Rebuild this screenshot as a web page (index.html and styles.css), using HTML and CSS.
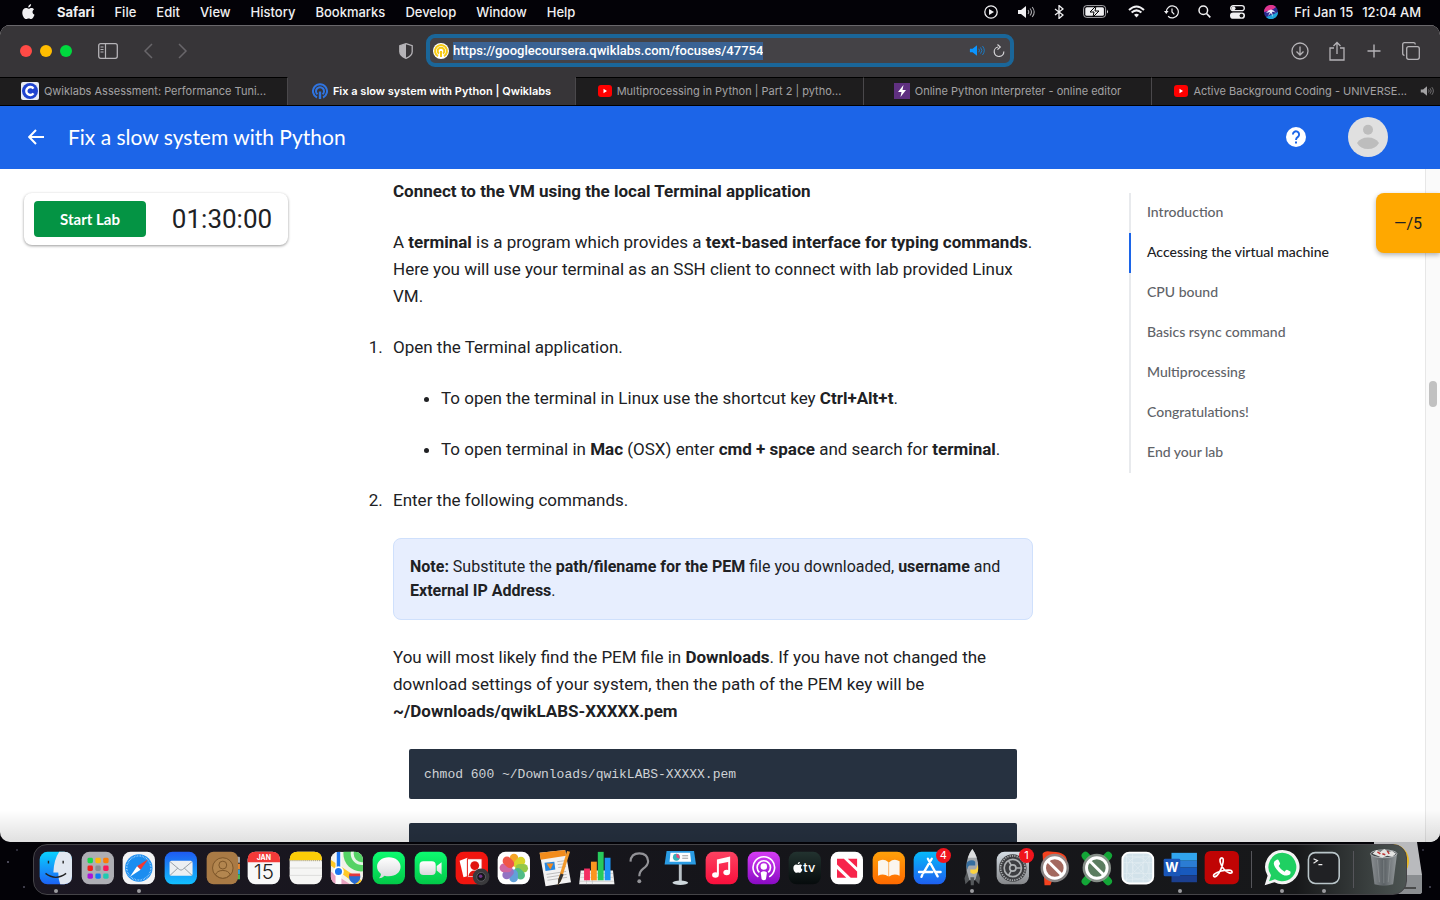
FILE: index.html
```html
<!DOCTYPE html>
<html lang="en">

<head>
  <meta charset="UTF-8">
  <meta name="viewport" content="width=device-width, initial-scale=1.0">
  <title>Fix a slow system with Python | Qwiklabs</title>
  <link rel="stylesheet" href="styles.css">
</head>

<body>
  <!-- shared gradients and small icons -->
  <svg class="defs" width="0" height="0" aria-hidden="true">
    <defs>
      <linearGradient id="g-blue" x2="0" y2="1"><stop stop-color="#1f5bf0"/><stop offset="1" stop-color="#12c0ff"/></linearGradient>
      <linearGradient id="g-store" x2="0" y2="1"><stop stop-color="#06b9f9"/><stop offset="1" stop-color="#1e5ff0"/></linearGradient>
      <linearGradient id="g-finder" x2="0" y2="1"><stop stop-color="#0ad1ff"/><stop offset="1" stop-color="#1c62f4"/></linearGradient>
      <linearGradient id="g-green" x2="0" y2="1"><stop stop-color="#0dfb70"/><stop offset="1" stop-color="#02c948"/></linearGradient>
      <linearGradient id="g-white" x2="0" y2="1"><stop stop-color="#ffffff"/><stop offset="1" stop-color="#d8d8dc"/></linearGradient>
      <linearGradient id="g-orange" x2="0" y2="1"><stop stop-color="#ffa10a"/><stop offset="1" stop-color="#ff6a00"/></linearGradient>
      <linearGradient id="g-pink" x2="0" y2="1"><stop stop-color="#fb4261"/><stop offset="1" stop-color="#fa0f3c"/></linearGradient>
      <linearGradient id="g-purple" x2="0" y2="1"><stop stop-color="#d53df5"/><stop offset="1" stop-color="#8a0bc4"/></linearGradient>
      <linearGradient id="g-tv" x2="0" y2="1"><stop stop-color="#22322f"/><stop offset="1" stop-color="#060b0c"/></linearGradient>
      <linearGradient id="g-steel" x2="0" y2="1"><stop stop-color="#d5dde4"/><stop offset="1" stop-color="#85878a"/></linearGradient>
      <linearGradient id="g-bin" x2="1" y2="0"><stop stop-color="#8b8f92"/><stop offset=".5" stop-color="#5b6165"/><stop offset="1" stop-color="#94999b"/></linearGradient>
      <symbol id="speaker" viewBox="0 0 18 14">
        <path d="M1 5h3l5-4v12L4 9H1z" fill="currentColor"/>
        <path d="M11 5q1.500 2 0 4M13 3.500q3 3.500 0 7M15.200 2q4 5 0 10" fill="none" stroke="currentColor" stroke-width="1.100" opacity=".7"/>
      </symbol>
      <symbol id="youtube" viewBox="0 0 14 12">
        <rect width="14" height="12" rx="3" fill="#f00"/>
        <path d="M5.500 3.800v4.400L9 6z" fill="#fff"/>
      </symbol>
      <symbol id="apple" viewBox="0 0 14 17">
        <path d="M9.800 0c.2 1.900-1.400 3.700-3.100 3.700C6.500 1.900 8.100.2 9.800 0zM12.900 5.700c-2.300 1.400-1.900 4.700.6 5.700-.8 2.300-2.300 4.700-3.700 4.700-1 0-1.400-.6-2.600-.6s-1.600.6-2.600.6C2.500 16.200.3 12.300.3 9.200c0-3.200 2-5 4-5 1.200 0 2.100.7 2.900.7s1.900-.8 3.300-.8c1 0 1.900.6 2.400 1.600z" fill="currentColor"/>
      </symbol>
    </defs>
  </svg>

  <header class="menubar">
    <nav class="menus">
      <svg class="apple" viewBox="0 0 14 17"><use href="#apple"/></svg>
      <a class="app" href="#">Safari</a>
      <a href="#">File</a>
      <a href="#">Edit</a>
      <a href="#">View</a>
      <a href="#">History</a>
      <a href="#">Bookmarks</a>
      <a href="#">Develop</a>
      <a href="#">Window</a>
      <a href="#">Help</a>
    </nav>
    <div class="status">
      <svg width="14" height="14" viewBox="0 0 14 14"><circle cx="7" cy="7" r="6.200" fill="none" stroke="currentColor" stroke-width="1.300"/><path d="M5 4v6l5-3z" fill="currentColor"/></svg>
      <svg width="18" height="14"><use href="#speaker"/></svg>
      <svg width="10" height="14" viewBox="0 0 10 14"><path d="M1 4l8 6-4 3.500V.5L9 4l-8 6" fill="none" stroke="currentColor" stroke-width="1.300"/></svg>
      <svg width="26" height="13" viewBox="0 0 26 13"><rect x=".6" y=".6" width="22" height="11.800" rx="3" fill="none" stroke="currentColor" opacity=".7"/><rect x="2.300" y="2.300" width="18.600" height="8.400" rx="1.500" fill="currentColor"/><path d="M24 4.500q1.800 2 0 4z" fill="currentColor"/><path d="M13 1L7 7h4l-1 5 6-6h-4z" fill="currentColor" stroke="#000"/></svg>
      <svg width="17" height="13" viewBox="0 0 17 13"><path d="M1 5q7.500-7 15 0M3.600 7.600q4.900-4.500 9.800 0" fill="none" stroke="currentColor" stroke-width="2"/><path d="M8.500 12.500L6 9.800q2.500-2 5 0z" fill="currentColor"/></svg>
      <svg width="15" height="14" viewBox="0 0 15 14"><path d="M2.300 7a6 6 0 1 1 1.800 4.200" fill="none" stroke="currentColor" stroke-width="1.200"/><path d="M0 6h4.600L2.300 9z" fill="currentColor"/><path d="M8 3.500V7l2.300 2.300" fill="none" stroke="currentColor" stroke-width="1.200"/></svg>
      <svg width="13" height="13" viewBox="0 0 13 13"><circle cx="5.300" cy="5.300" r="4.300" fill="none" stroke="currentColor" stroke-width="1.500"/><path d="M8.500 8.500l3.800 3.800" stroke="currentColor" stroke-width="1.700"/></svg>
      <svg width="15" height="14" viewBox="0 0 15 14"><rect x=".7" y=".7" width="13.600" height="5" rx="2.500" fill="none" stroke="currentColor" stroke-width="1.300"/><circle cx="3.500" cy="3.200" r="2" fill="currentColor"/><rect y="7.500" width="15" height="6.300" rx="3.100" fill="currentColor"/><circle cx="11.500" cy="10.600" r="1.900" fill="#111"/></svg>
      <svg width="14" height="14" viewBox="0 0 14 14"><circle cx="7" cy="7" r="7" fill="#2b2c8f"/><path d="M0 7a7 7 0 0 1 12-5Q8 6 0 7z" fill="#e0358e"/><path d="M14 7a7 7 0 0 1-12 5q6-2 12-5z" fill="#1fa5d8"/><path d="M2 8q5-7 10 0-3-2-4-1l1 5-2-4-3 3 2-4z" fill="#eef"/></svg>
      <span class="clock"><span>Fri Jan 15</span><span>12:04 AM</span></span>
    </div>
  </header>

  <main class="window">
    <div class="toolbar">
      <div class="toolbar-left">
        <div class="lights"><i></i><i></i><i></i></div>
        <button class="tool sidebar-btn" aria-label="Sidebar"><svg width="20" height="16" viewBox="0 0 20 16"><rect x=".7" y=".7" width="18.600" height="14.600" rx="2" fill="none" stroke="currentColor" stroke-width="1.300"/><path d="M7.500 1v14M2.500 4h3M2.500 6.500h3M2.500 9h3" stroke="currentColor" stroke-width="1.200"/></svg></button>
        <button class="tool dim" aria-label="Back"><svg width="10" height="16" viewBox="0 0 10 16"><path d="M9 1L2 8l7 7" fill="none" stroke="currentColor" stroke-width="1.500"/></svg></button>
        <button class="tool dim forward" aria-label="Forward"><svg width="10" height="16" viewBox="0 0 10 16"><path d="M1 1l7 7-7 7" fill="none" stroke="currentColor" stroke-width="1.500"/></svg></button>
        <button class="tool shield" aria-label="Privacy report"><svg width="14" height="16" viewBox="0 0 14 16"><path d="M7 .7l6.200 2v6q0 4-6.200 6.600Q.8 12.700.8 8.700v-6z" fill="none" stroke="currentColor" stroke-width="1.300"/><path d="M7 .7v14.600Q.8 12.700.8 8.700v-6z" fill="currentColor"/></svg></button>
      </div>
      <div class="address">
        <svg width="16" height="16" viewBox="0 0 16 16"><circle cx="8" cy="8" r="8" fill="#fff"/><path d="M5 13.200a6 6 0 1 1 6 0M6 10.600a3.300 3.300 0 1 1 4 0" fill="none" stroke="#f7cb15" stroke-width="2"/><path d="M8 8v6" stroke="#f7cb15" stroke-width="2"/></svg>
        <input type="text" aria-label="Address" value="https://googlecoursera.qwiklabs.com/focuses/47754" size="40">
        <svg class="sound" width="16" height="13"><use href="#speaker"/></svg>
        <button class="tool reload" aria-label="Reload"><svg width="12" height="14" viewBox="0 0 12 14"><path d="M5 3a4.800 4.800 0 1 0 5.800 4.500M4.500.5L7.300 3 4.500 5.600" fill="none" stroke="currentColor" stroke-width="1.200"/></svg></button>
      </div>
      <div class="toolbar-right">
        <button class="tool" aria-label="Downloads"><svg width="18" height="18" viewBox="0 0 18 18"><path d="M9 4.500v8.500M5.500 9.500L9 13l3.500-3.500" fill="none" stroke="currentColor" stroke-width="1.300"/><circle cx="9" cy="9" r="8" fill="none" stroke="currentColor" stroke-width="1.300"/></svg></button>
        <button class="tool" aria-label="Share"><svg width="18" height="20" viewBox="0 0 18 20"><path d="M6 7H2v12h14V7h-4M9 13V1.500M5.500 5L9 1.500 12.500 5" fill="none" stroke="currentColor" stroke-width="1.300"/></svg></button>
        <button class="tool" aria-label="New tab"><svg width="18" height="18" viewBox="0 0 18 18"><path d="M9 2.500v13M2.500 9h13" stroke="currentColor" stroke-width="1.400"/></svg></button>
        <button class="tool" aria-label="Tab overview"><svg width="18" height="18" viewBox="0 0 18 18"><rect x="4.700" y="4.700" width="12.600" height="12.600" rx="2" fill="none" stroke="currentColor" stroke-width="1.300"/><path d="M2.500 13.300Q.7 13.300.7 11.500v-9Q.7.7 2.500.7h9q1.800 0 1.800 1.800" fill="none" stroke="currentColor" stroke-width="1.300"/></svg></button>
      </div>
    </div>

    <nav class="tabs">
      <a class="tab" href="#">
        <svg width="18" height="18" viewBox="0 0 18 18"><rect width="18" height="18" rx="2" fill="#e9ecf5"/><circle cx="9" cy="9" r="8" fill="#1f43cf"/><path d="M12.500 6.600a4 4 0 1 0 0 4.800" fill="none" stroke="#fff" stroke-width="2.400"/></svg>
        <span>Qwiklabs Assessment: Performance Tuni...</span>
      </a>
      <a class="tab active" href="#">
        <svg width="16" height="16" viewBox="0 0 16 16"><path d="M5 14.500a7 7 0 1 1 6 0M5.500 11.300a4 4 0 1 1 5 0" fill="none" stroke="#2f74e0" stroke-width="2"/><path d="M8 8.500V16" stroke="#2f74e0" stroke-width="2.400"/></svg>
        <span>Fix a slow system with Python | Qwiklabs</span>
      </a>
      <a class="tab" href="#">
        <svg width="14" height="12"><use href="#youtube"/></svg>
        <span>Multiprocessing in Python | Part 2 | pytho...</span>
      </a>
      <a class="tab" href="#">
        <svg width="16" height="16" viewBox="0 0 16 16"><rect width="16" height="16" fill="#5f3080"/><path d="M9.500 2L4 9h3.500L6.500 14 12 7H8.500z" fill="#fff"/></svg>
        <span>Online Python Interpreter - online editor</span>
      </a>
      <a class="tab playing" href="#">
        <svg width="14" height="12"><use href="#youtube"/></svg>
        <span>Active Background Coding - UNIVERSE...</span>
        <svg class="tab-sound" width="14" height="12"><use href="#speaker"/></svg>
      </a>
    </nav>

    <header class="lab-header">
      <a class="back" href="#" aria-label="Back"><svg width="16" height="16" viewBox="0 0 16 16"><path d="M16 8H1.500M8 1L1.200 8 8 15" fill="none" stroke="#fff" stroke-width="2"/></svg></a>
      <h1>Fix a slow system with Python</h1>
      <button class="help" aria-label="Help"><svg width="20" height="20" viewBox="0 0 20 20"><circle cx="10" cy="10" r="10" fill="#fff"/><path d="M6.900 7.500a3.100 3.100 0 1 1 5 2.400Q10 11.200 10 13" fill="none" stroke="#1c65e8" stroke-width="1.900"/><rect x="9" y="14.500" width="2" height="2" fill="#1c65e8"/></svg></button>
      <button class="avatar" aria-label="Account"><svg width="40" height="40" viewBox="0 0 40 40"><circle cx="20" cy="20" r="20" fill="#e0e0e0"/><circle cx="20" cy="12.800" r="5" fill="#bdbdbd"/><path d="M9 26q3.500-5.500 11-5.500T31 26q-3.500 6-11 6T9 26z" fill="#bdbdbd"/></svg></button>
    </header>

    <div class="lab">
      <aside class="lab-side">
        <div class="control">
          <button class="start">Start Lab</button>
          <div class="timer">01:30:00</div>
        </div>
      </aside>

      <article class="content">
        <p><strong>Connect to the VM using the local Terminal application</strong></p>
        <p>A <strong>terminal</strong> is a program which provides a <strong>text-based interface for typing commands</strong>. Here you will use your terminal as an SSH client to connect with lab provided Linux VM.</p>
        <ol>
          <li>Open the Terminal application.
            <ul>
              <li>To open the terminal in Linux use the shortcut key <strong>Ctrl+Alt+t</strong>.</li>
              <li>To open terminal in <strong>Mac</strong> (OSX) enter <strong>cmd + space</strong> and search for <strong>terminal</strong>.</li>
            </ul>
          </li>
          <li>Enter the following commands.</li>
        </ol>
        <div class="note"><strong>Note:</strong> Substitute the <strong>path/filename for the PEM</strong> file you downloaded, <strong>username</strong> and <strong>External IP Address</strong>.</div>
        <p>You will most likely find the PEM file in <strong>Downloads</strong>. If you have not changed the download settings of your system, then the path of the PEM key will be <strong class="path">~/Downloads/qwikLABS-XXXXX.pem</strong></p>
        <pre><code>chmod 600 ~/Downloads/qwikLABS-XXXXX.pem</code></pre>
        <pre></pre>
      </article>

      <nav class="outline">
        <a href="#">Introduction</a>
        <a class="active" href="#">Accessing the virtual machine</a>
        <a href="#">CPU bound</a>
        <a href="#">Basics rsync command</a>
        <a href="#">Multiprocessing</a>
        <a href="#">Congratulations!</a>
        <a href="#">End your lab</a>
      </nav>

      <div class="scrollbar"><div class="thumb"></div></div>
      <button class="score">—/5</button>
    </div>
  </main>

  <footer class="desktop">
    <svg class="drive" width="48" height="52" viewBox="0 0 48 52"><path d="M0 0h43l5 33v16q0 3-3 3H0z" fill="#b9babd"/><path d="M0 33h48v16q0 3-3 3H0z" fill="#8b8e91"/><path d="M0 46h42" stroke="#333" stroke-width="1.500"/><circle cx="18" cy="19" r="17" fill="#e8b923"/><circle cx="17" cy="19" r="16" fill="#c53a2a"/></svg>
    <nav class="dock">
      <!-- Finder -->
      <a href="#" class="running" aria-label="Finder"><svg viewBox="-4 -7 41 50"><rect width="33" height="33" rx="8" fill="url(#g-finder)"/><path d="M20 0h5q8 0 8 8v17q0 8-8 8h-4q-2-5-2-12h-5Q14.500 8 20 0z" fill="#e1e7f0"/><path d="M6 22q10.500 8 21 0M9 9v3M24 9v3" fill="none" stroke="#222" stroke-width="1.400"/></svg></a>
      <!-- Launchpad -->
      <a href="#" aria-label="Launchpad"><svg viewBox="-4 -7 41 50"><rect width="33" height="33" rx="8" fill="#aeaeb4"/><rect x="6" y="6" width="5.500" height="5.500" rx="1.500" fill="#19d84d"/><rect x="14" y="6" width="5.500" height="5.500" rx="1.500" fill="#fdb90b"/><rect x="22" y="6" width="5.500" height="5.500" rx="1.500" fill="#fb7d09"/><rect x="6" y="14" width="5.500" height="5.500" rx="1.500" fill="#f41f1d"/><rect x="14" y="14" width="5.500" height="5.500" rx="1.500" fill="#8a8e92"/><rect x="22" y="14" width="5.500" height="5.500" rx="1.500" fill="#f9185b"/><rect x="6" y="22" width="5.500" height="5.500" rx="1.500" fill="#a813dc"/><rect x="14" y="22" width="5.500" height="5.500" rx="1.500" fill="#127cf3"/><rect x="22" y="22" width="5.500" height="5.500" rx="1.500" fill="#1ecbb0"/></svg></a>
      <!-- Safari -->
      <a href="#" class="running" aria-label="Safari"><svg viewBox="-4 -7 41 50"><rect width="33" height="33" rx="8" fill="#f3f3f5"/><circle cx="16.500" cy="16.500" r="14" fill="#1b8df0"/><circle cx="16.500" cy="16.500" r="12.300" fill="none" stroke="#d5eaff" stroke-width="1.600" stroke-dasharray=".5 1.100"/><path d="M26 7.500L18.300 18.300 14.700 14.700z" fill="#f4382f"/><path d="M7.500 25.500l7.200-10.800 3.600 3.600z" fill="#fff"/></svg></a>
      <!-- Mail -->
      <a href="#" aria-label="Mail"><svg viewBox="-4 -7 41 50"><rect width="33" height="33" rx="8" fill="url(#g-blue)"/><rect x="5" y="9" width="23.500" height="15.500" rx="2" fill="#eceff2"/><path d="M5.500 10l9.500 8q1.700 1.400 3.400 0l9.500-8M5.500 24l8-7.500M28 24l-8-7.500" fill="none" stroke="#8d969e" stroke-width=".9"/></svg></a>
      <!-- Contacts -->
      <a href="#" aria-label="Contacts"><svg viewBox="-4 -7 41 50"><path d="M30 5h3q1 0 1 1v5h-4z" fill="#aaa"/><path d="M30 12h4v6h-4z" fill="#e5872f"/><path d="M30 18h4v5h-4z" fill="#2da0dc"/><path d="M30 23h4v5h-4z" fill="#4cba4d"/><rect width="32" height="33" rx="7" fill="#a97a45"/><g fill="#b3864f" stroke="#7c5529" stroke-width="1"><circle cx="16.500" cy="16.500" r="10.500"/><path d="M9 23.500q1.500-4.500 7.500-4.500t7.500 4.500q-7.500 7-15 0z"/><circle cx="16.500" cy="13.500" r="4"/></g></svg></a>
      <!-- Calendar -->
      <a href="#" aria-label="Calendar"><svg viewBox="-4 -7 41 50"><rect width="33" height="33" rx="8" fill="#f8f8f8"/><path d="M0 10.500V8q0-8 8-8h17q8 0 8 8v2.500z" fill="#f33a38"/><text x="16.500" y="8" class="cal-month">JAN</text><text x="16.500" y="28" class="cal-day">15</text></svg></a>
      <!-- Notes -->
      <a href="#" aria-label="Notes"><svg viewBox="-4 -7 41 50"><rect width="33" height="33" rx="8" fill="#f5f5f4"/><path d="M0 8.500V8q0-8 8-8h17q8 0 8 8v.5z" fill="#fccd07"/><path d="M0 9h33" stroke="#9b9580" stroke-dasharray="1 1"/><path d="M0 16.500h33M0 24h33" stroke="#d6d6d4" stroke-width=".8"/></svg></a>
      <!-- Maps -->
      <a href="#" aria-label="Maps"><svg viewBox="-4 -7 41 50"><clipPath id="c-maps"><rect width="33" height="33" rx="8"/></clipPath><g clip-path="url(#c-maps)"><rect width="33" height="33" fill="#f3f1ea"/><circle cx="31" cy="2" r="18" fill="#55d365"/><circle cx="32" cy="2" r="10" fill="none" stroke="#e6f6e6" stroke-width="3"/><path d="M0 8l33 22v8L0 14z" fill="#ffc928"/><path d="M0 20l20 13H0z" fill="#e9a2c0"/><path d="M8 33V0" stroke="#fff" stroke-width="6"/><path d="M8 20V0" stroke="#1d76f0" stroke-width="3.600"/><circle cx="8" cy="20" r="4.500" fill="#1d76f0" stroke="#fff" stroke-width="1.800"/><path d="M19 23h11q2 6-5.500 10Q17 29 19 23z" fill="#2a6bd2"/><path d="M19 22h11v3H19z" fill="#e3373c"/></g></svg></a>
      <!-- Messages -->
      <a href="#" aria-label="Messages"><svg viewBox="-4 -7 41 50"><rect width="33" height="33" rx="8" fill="url(#g-green)"/><path d="M16.500 5.500c7 0 12 4.200 12 9.800s-5 9.700-12 9.700c-1.600 0-3-.2-4.300-.6Q9.500 27 6.500 27q2-2 2-4.500c-2.500-1.800-4-4.300-4-7.200 0-5.600 5-9.800 12-9.800z" fill="url(#g-white)"/></svg></a>
      <!-- FaceTime -->
      <a href="#" aria-label="FaceTime"><svg viewBox="-4 -7 41 50"><rect width="33" height="33" rx="8" fill="url(#g-green)"/><rect x="5" y="9.500" width="16.500" height="14" rx="4" fill="url(#g-white)"/><path d="M22.500 14.500l5-4v12.500l-5-4z" fill="url(#g-white)"/></svg></a>
      <!-- Photo Booth -->
      <a href="#" aria-label="Photo Booth"><svg viewBox="-4 -7 41 50"><rect width="33" height="33" rx="8" fill="#f1150f"/><path d="M4 9l8-3 3 18-7 2z" fill="#fff"/><path d="M12 7h15v19H12z" fill="#fff" stroke="#e01510"/><circle cx="19.500" cy="14" r="4.500" fill="#e01510"/><path d="M13 25q1-6 6.500-6t6.500 6z" fill="#e01510"/><circle cx="26" cy="25.500" r="8.500" fill="#3a3a3d"/><circle cx="26" cy="25.500" r="4.500" fill="#17171b" stroke="#5b5b60"/><circle cx="25.500" cy="25" r="1.800" fill="#703488"/></svg></a>
      <!-- Photos -->
      <a href="#" aria-label="Photos"><svg viewBox="-4 -7 41 50"><rect width="33" height="33" rx="8" fill="#fff"/><g opacity=".95"><rect x="12.300" y="2" width="8.800" height="13" rx="4.400" fill="#f7a11b"/><rect x="12.300" y="2" width="8.800" height="13" rx="4.400" fill="#d5d320" transform="rotate(45 16.500 16.500)"/><rect x="12.300" y="2" width="8.800" height="13" rx="4.400" fill="#8fc63f" transform="rotate(90 16.500 16.500)"/><rect x="12.300" y="2" width="8.800" height="13" rx="4.400" fill="#47b881" transform="rotate(135 16.500 16.500)"/><rect x="12.300" y="2" width="8.800" height="13" rx="4.400" fill="#5a9bd8" transform="rotate(180 16.500 16.500)"/><rect x="12.300" y="2" width="8.800" height="13" rx="4.400" fill="#8d6cc0" transform="rotate(225 16.500 16.500)"/><rect x="12.300" y="2" width="8.800" height="13" rx="4.400" fill="#cd5f9c" transform="rotate(270 16.500 16.500)"/><rect x="12.300" y="2" width="8.800" height="13" rx="4.400" fill="#f04e3e" transform="rotate(315 16.500 16.500)"/></g></svg></a>
      <!-- Pages -->
      <a href="#" aria-label="Pages"><svg viewBox="-4 -7 41 50"><path d="M0 1l26-3 6 33-26 4z" fill="#f2f2f2"/><path d="M0 1l26-3 1 6L1 8z" fill="#f28c1c"/><path d="M5 11l10-1 1 8-10 1.500z" fill="#2787df"/><path d="M7 12h7l-3 6z" fill="#f58a1d"/><path d="M18 10l8-1M18.500 13l8-1M19 16l8-1M7 23l20-3M7.500 26l20-3M8 29l20-3" stroke="#bbb"/><path d="M28-1l3 1-9 29-3.500 5 .5-6z" fill="#f29a2c"/><path d="M21.500 22l3 1-3 7-3 4 .5-6z" fill="#333"/></svg></a>
      <!-- Numbers -->
      <a href="#" aria-label="Numbers"><svg viewBox="-4 -7 41 50"><path d="M0 19h33l1.500 14h-36z" fill="#f1f1f1"/><path d="M0 22h33M-.5 26h34M-1 30h35M6 19v14M12 19v14" stroke="#bbb" stroke-width=".6"/><path d="M3.500 17h6v12h-6z" fill="#f42f63"/><path d="M10.500 10h6v19h-6z" fill="#fb9520"/><path d="M17.500 0h6v29h-6z" fill="#27ca5c"/><path d="M24.500 6h6v23h-6z" fill="#1c93f3"/></svg></a>
      <!-- missing app -->
      <a href="#" aria-label="Unknown application"><svg viewBox="-4 -7 41 50"><path d="M8 10q.5-8.500 9-8.500t9 8q0 4-5 7.500-4 3-4 8" fill="none" stroke="#929297" stroke-width="2.200"/><circle cx="17" cy="30" r="2" fill="#929297"/></svg></a>
      <!-- Keynote -->
      <a href="#" aria-label="Keynote"><svg viewBox="-4 -7 41 50"><path d="M15.500 12h3v18h-3z" fill="#b9c1c6"/><ellipse cx="17" cy="31.500" rx="8" ry="2.300" fill="#cfd8dd"/><path d="M3-1h28l2 14H1z" fill="#2a9ce4"/><path d="M7 1h20l1 9H6z" fill="#fff"/><circle cx="13" cy="5.500" r="3.500" fill="#33b4ba"/><path d="M13 5.500V2a3.500 3.500 0 0 1 3 5z" fill="#e94a7a"/><path d="M19 4h6M19 6.500h6" stroke="#999"/></svg></a>
      <!-- Music -->
      <a href="#" aria-label="Music"><svg viewBox="-4 -7 41 50"><rect width="33" height="33" rx="8" fill="url(#g-pink)"/><path d="M12.500 23V8.500L24 6v14.500" fill="none" stroke="#fff" stroke-width="2"/><path d="M12.500 8.500L24 6v4l-11.500 2.500z" fill="#fff"/><ellipse cx="10" cy="23.500" rx="3.400" ry="2.800" fill="#fff"/><ellipse cx="21.500" cy="21" rx="3.400" ry="2.800" fill="#fff"/></svg></a>
      <!-- Podcasts -->
      <a href="#" aria-label="Podcasts"><svg viewBox="-4 -7 41 50"><rect width="33" height="33" rx="8" fill="url(#g-purple)"/><g fill="none" stroke="#fff" stroke-width="1.700"><path d="M11 25.500a11 11 0 1 1 11 0M12 21a6.800 6.800 0 1 1 9 0"/></g><circle cx="16.500" cy="15" r="3.300" fill="#fff"/><path d="M13.300 21q3.200-2.500 6.400 0l-1 7q-2.200 2-4.400 0z" fill="#fff"/></svg></a>
      <!-- TV -->
      <a href="#" aria-label="TV"><svg viewBox="-4 -7 41 50"><rect width="33" height="33" rx="8" fill="url(#g-tv)"/><svg x="4.500" y="10" width="10" height="12" color="#fff"><use href="#apple"/></svg><text x="15" y="21" class="tv">tv</text></svg></a>
      <!-- News -->
      <a href="#" aria-label="News"><svg viewBox="-4 -7 41 50"><rect width="33" height="33" rx="8" fill="#fff"/><path d="M6.500 7h7L27 20v6.500h-6.500L6.500 13z" fill="#f7244b"/><path d="M17.500 7H27v9zM6.500 17.500v9H16z" fill="#f7244b"/></svg></a>
      <!-- Books -->
      <a href="#" aria-label="Books"><svg viewBox="-4 -7 41 50"><rect width="33" height="33" rx="8" fill="url(#g-orange)"/><path d="M16.200 10.500Q11 6 5.500 9.500v15q5.500-3 10.700.7zM16.800 10.500Q22 6 27.500 9.500v15q-5.500-3-10.700.7z" fill="#fbf6ee"/></svg></a>
      <!-- App Store -->
      <a href="#" aria-label="App Store"><svg viewBox="-4 -7 41 50"><rect width="33" height="33" rx="8" fill="url(#g-store)"/><path d="M18.500 7L10 21.500M14.500 7L24.500 25M5.500 20.500H19M22 20.500h5.500M8.800 23.500L8 25.500" stroke="#fff" stroke-width="2.400" stroke-linecap="round"/></svg><span class="count">4</span></a>
      <!-- PyLauncher -->
      <a href="#" class="running" aria-label="Python Launcher"><svg viewBox="-4 -7 41 50"><path d="M17-3q6 8 6 18t-3 14h-6q-3-4-3-14t6-18z" fill="#a5a9ad"/><path d="M17-3q3 4 4.500 9h-9Q14 1 17-3z" fill="#dcdedf"/><path d="M11.500 20L9 27l1 6 4-4zM22.500 20l2.500 7-1 6-4-4zM15 26h4l-.5 8h-3z" fill="#55585b"/><path d="M12 10q5-3 8 0v4h-6q-2 1-2 4-2-4 0-8z" fill="#356e9f"/><path d="M22 13q2 4 0 8-4 3-7 0v-3h5q2-1 2-5z" fill="#fdd33f"/></svg></a>
      <!-- System Preferences -->
      <a href="#" aria-label="System Preferences"><svg viewBox="-4 -7 41 50"><rect width="33" height="33" rx="8" fill="url(#g-steel)"/><circle cx="16.500" cy="16.500" r="14" fill="#3c3d40"/><circle cx="16.500" cy="16.500" r="12.500" fill="none" stroke="#a8abad" stroke-width="1.800" stroke-dasharray="1.300 1.100"/><g fill="none" stroke="#aeb1b3" stroke-width="1.700"><circle cx="16.500" cy="16.500" r="8.800"/><circle cx="16.500" cy="16.500" r="3.200"/><path d="M19.500 16.500h6M15 19.200l-3 5M15 13.800l-3-5"/></g></svg><span class="count">1</span></a>
      <!-- blocked apps -->
      <a href="#" aria-label="Blocked application"><svg viewBox="-4 -7 41 50"><path d="M4 2Q6-2 14 0q16 0 15 12-1 10-14 14l-3 8H6z" fill="#f4421e"/><circle cx="16.500" cy="16.500" r="14.500" fill="#8f8d8d" opacity=".9"/><circle cx="16.500" cy="16.500" r="10.500" fill="#a3695f" stroke="#fff" stroke-width="3"/><path d="M9 9l15 15" stroke="#fff" stroke-width="3"/></svg></a>
      <a href="#" aria-label="Blocked application"><svg viewBox="-4 -7 41 50"><path d="M5 4l23 26M28 4L5 30" stroke="#13a637" stroke-width="8" stroke-linecap="round"/><circle cx="16.500" cy="16.500" r="14.500" fill="#8f9890" opacity=".92"/><circle cx="16.500" cy="16.500" r="10.500" fill="#5b7d60" stroke="#fff" stroke-width="3"/><path d="M9 9l15 15" stroke="#fff" stroke-width="3"/></svg></a>
      <!-- generic app -->
      <a href="#" aria-label="Application"><svg viewBox="-4 -7 41 50"><rect x=".8" y=".8" width="31.400" height="31.400" rx="7" fill="#d2e2ea" stroke="#fff" stroke-width="2"/><g fill="none" stroke="#fff" stroke-width=".5" opacity=".5"><circle cx="16.500" cy="16.500" r="11"/><circle cx="16.500" cy="16.500" r="5"/><path d="M5 2v29M11 2v29M22 2v29M28 2v29M2 5h29M2 11h29M2 22h29M2 28h29M3 3l27 27M30 3L3 30"/></g></svg></a>
      <!-- Word -->
      <a href="#" class="running" aria-label="Word"><svg viewBox="-4 -7 41 50"><path d="M8 1h26v8H8z" fill="#31a5ee"/><path d="M8 9h26v7H8z" fill="#2b7cd3"/><path d="M8 16h26v8H8z" fill="#185abd"/><path d="M8 24h26v7H8z" fill="#1b3f8f"/><rect y="7" width="17" height="18" rx="1.500" fill="#1a56b8"/><text x="8.500" y="20.500" class="word">W</text></svg></a>
      <!-- Acrobat -->
      <a href="#" aria-label="Acrobat Reader"><svg viewBox="-4 -7 41 50"><rect x="-1" y="-1" width="35" height="34" rx="6" fill="#c00404"/><path d="M15.500 6.500c3-1.500 3 3 1.500 7.500-1.500 5-5 11.500-8 11.500-2.500-1 0-4.500 7-6 6-1.500 11-1.200 11 1s-5 1.200-8.500-3c-3-3.500-5-9.500-3-11z" fill="none" stroke="#fff" stroke-width="1.700"/></svg></a>
      <i class="sep"></i>
      <!-- WhatsApp -->
      <a href="#" class="running" aria-label="WhatsApp"><svg viewBox="-4 -7 41 50"><path d="M17-2a17.500 17.500 0 1 1-8 33l-10 3 3-9.500A17.500 17.500 0 0 1 17-2z" fill="#f4f4f4"/><path d="M17 1a14.500 14.500 0 1 1-7.500 27L3.500 30l2-6.200A14.500 14.500 0 0 1 17 1z" fill="#1fd062"/><path d="M10.500 8.500q2-1.500 3 .5l1.300 3q0 1-1.500 2.500 2 4 6 5.700 1.500-2.200 2.500-2l3.500 1.800q1 3.500-3.500 4.200-4 .3-8.500-4-5-5-5-8.500 0-2 2.200-3.200z" fill="#fff"/></svg></a>
      <!-- Terminal -->
      <a href="#" class="running" aria-label="Terminal"><svg viewBox="-4 -7 41 50"><rect x=".8" y=".8" width="31.400" height="31.400" rx="7" fill="#202124" stroke="#b9c5c9" stroke-width="1.600"/><path d="M6 7l4 2-4 2.500M11 13h4" fill="none" stroke="#eee" stroke-width="1.200"/></svg></a>
      <i class="sep"></i>
      <!-- Trash -->
      <a href="#" aria-label="Trash"><svg viewBox="-4 -7 41 50"><path d="M3 2h27l-4 31q-9.500 3-19 0z" fill="url(#g-bin)"/><ellipse cx="16.500" cy="2" rx="13.500" ry="4" fill="#3f4447" stroke="#b1b5b7"/><path d="M5 2l4-4 4 2 4-3 4 3 4-1 4 3-4 3-5-1-5 2-5-2z" fill="#e4e4e2"/><path d="M10 0l3 2M20-1l2 3M15 2l3 1" stroke="#b33" stroke-width="1.500"/><path d="M10 8l2 23M16.500 8v24M23 8l-2 23" stroke="#9da2a4" stroke-width="1" opacity=".5"/></svg></a>
    </nav>
  </footer>
</body>

</html>
```
FILE: styles.css
```css
* {
  box-sizing: border-box;
}

body {
  display: flex;
  flex-direction: column;
  height: 100vh;
  margin: 0;
  overflow: hidden;
  background: #030207;
  font-family: Roboto, sans-serif;
  color: #202124;
}

a {
  color: inherit;
  text-decoration: none;
}

button {
  padding: 0;
  border: none;
  background: none;
  font: inherit;
  color: inherit;
  cursor: pointer;
}

svg {
  display: block;
  flex: none;
}

.defs {
  position: absolute;
}

/* menu bar */
.menubar {
  display: flex;
  justify-content: space-between;
  align-items: center;
  height: 25px;
  padding: 0 19px 2px 22px;
  font: 500 13px/22px Inter, sans-serif;
  color: #f0f0f2;
  white-space: nowrap;
}

.menus {
  display: flex;
  align-items: center;
  gap: 20px;
}

.menus .apple {
  width: 13px;
  height: 16px;
  margin-right: 2px;
}

.menus .app {
  font-weight: 700;
}

.status {
  display: flex;
  align-items: center;
  gap: 19px;
}

.clock {
  display: flex;
  gap: 9px;
  margin-left: -3px;
}

/* browser window */
.window {
  position: relative;
  flex: 1;
  display: flex;
  flex-direction: column;
  min-height: 0;
  overflow: hidden;
  border-radius: 10px;
  background: #fff;
}

.window::after {
  content: '';
  position: absolute;
  left: 0;
  right: 0;
  bottom: 0;
  height: 32px;
  background: linear-gradient(rgba(0, 0, 0, 0), rgba(0, 0, 0, .12));
  pointer-events: none;
}

.toolbar {
  display: grid;
  grid-template-columns: 1fr minmax(0, 588px) 1fr;
  align-items: center;
  height: 52px;
  padding-bottom: 2px;
  border-top: 1px solid #69676b;
  background: #373538;
  color: #b5b3b7;
}

.toolbar-left {
  display: flex;
  align-items: center;
  padding: 0 13px 0 20px;
}

.lights {
  display: flex;
  gap: 8px;
  margin-right: 26px;
}

.lights i {
  width: 12px;
  height: 12px;
  border-radius: 50%;
  background: #ff4a46;
}

.lights i:nth-child(2) {
  background: #ffbd00;
}

.lights i:nth-child(3) {
  background: #00d93e;
}

.tool {
  display: block;
}

.tool.dim {
  margin-left: 25px;
  color: #68666a;
}

.shield {
  margin-left: auto;
}

.address {
  display: flex;
  align-items: center;
  height: 33px;
  padding: 0 5px 0 3px;
  border: 4px solid #1a6699;
  border-radius: 9px;
  background: #444246;
}

.address input {
  field-sizing: content;
  min-width: 0;
  height: 18px;
  margin-left: 4px;
  padding: 0;
  border: none;
  outline: none;
  background: #3a6293;
  font: 500 13px/18px Roboto, sans-serif;
  color: #fff;
}

.sound {
  margin-left: auto;
  color: #0a95ff;
}

.reload {
  margin-left: 8px;
  color: #d5d4d7;
}

.toolbar-right {
  display: flex;
  justify-content: flex-end;
  align-items: center;
  gap: 19px;
  padding-right: 20px;
}

.tabs {
  display: flex;
  height: 29px;
  border-bottom: 1px solid #000;
  background: #1e1d1e;
}

.tab {
  flex: 0 0 20%;
  display: flex;
  justify-content: center;
  align-items: center;
  gap: 5px;
  padding-bottom: 2px;
  border-top: 1px solid #000;
  border-right: 1px solid #4a484b;
  font: 400 11px/16px Inter, sans-serif;
  color: #a3a2a4;
  white-space: nowrap;
}

.tab:last-child {
  border-right: none;
}

.tab.active {
  border-top-color: #373538;
  background: #373538;
  font-weight: 600;
  color: #fff;
}

.tab.playing {
  justify-content: flex-end;
  padding-right: 6px;
}

.tab-sound {
  margin-left: 8px;
}

/* lab page */
.lab-header {
  display: flex;
  align-items: center;
  height: 63px;
  padding: 0 52px 2px 28px;
  background: #1c65e8;
  color: #fff;
}

.lab-header h1 {
  margin: 0 auto 0 24px;
  font: 400 21px/32px Lato, sans-serif;
}

.avatar {
  margin-left: 42px;
}

.lab {
  position: relative;
  flex: 1;
  display: grid;
  grid-template-columns: 297px 1fr 296px 15px;
  min-height: 0;
}

.lab-side {
  padding: 24px 9px 0 24px;
}

.control {
  display: flex;
  align-items: center;
  height: 52px;
  padding: 0 10px;
  border-radius: 8px;
  box-shadow: 0 1px 3px rgba(0, 0, 0, .4);
}

.start {
  flex: none;
  width: 112px;
  height: 36px;
  border-radius: 4px;
  background: #049444;
  font: 700 15px/20px Lato, sans-serif;
  color: #fff;
}

.timer {
  flex: 1;
  padding-left: 20px;
  font-size: 26px;
  line-height: 36px;
  text-align: center;
}

.content {
  width: 100%;
  max-width: 640px;
  min-height: 0;
  margin: 0 auto;
  padding-top: 9px;
  font-size: 17px;
  line-height: 27px;
}

.content p,
.content ol {
  margin: 0 0 24px;
}

.content ol {
  margin-left: -6px;
  padding: 0;
}

.content ol > li {
  margin-bottom: 24px;
  padding-left: 6px;
}

.content ul {
  margin: 24px 0 0;
  padding-left: 48px;
  list-style: disc;
}

.content ul li {
  margin-bottom: 24px;
}

.path {
  white-space: nowrap;
}

.note {
  margin-bottom: 24px;
  padding: 16px;
  border: 1px solid #cfe0fc;
  border-radius: 8px;
  background: #e7eefe;
  font-size: 16px;
  line-height: 24px;
}

.content pre {
  height: 50px;
  margin: 0 16px 24px;
  padding: 15px;
  border-radius: 2px;
  background: #263140;
  font: 13px/22px 'Liberation Mono', monospace;
  color: #cfd2d6;
}

.content code {
  font: inherit;
}

.outline {
  align-self: start;
  margin-top: 24px;
}

.outline a {
  display: block;
  height: 40px;
  padding-left: 16px;
  border-left: 2px solid #e8eaed;
  font: 500 14px/38px Lato, sans-serif;
  color: #5f6368;
}

.outline a.active {
  border-left-color: #1c65e8;
  color: #202124;
}

.scrollbar {
  padding: 212px 3px 0;
  border-left: 1px solid #e7e7e7;
  background: #fafafa;
}

.thumb {
  width: 8px;
  height: 26px;
  border-radius: 4px;
  background: #c1c1c1;
}

.score {
  position: absolute;
  top: 24px;
  right: 0;
  width: 64px;
  height: 60px;
  border-radius: 8px 0 0 8px;
  background: #ffa800;
  box-shadow: 0 2px 5px rgba(0, 0, 0, .3);
  font-size: 16px;
}

/* dock */
.desktop {
  position: relative;
  height: 58px;
  padding: 2px 33px 0;
  background-image:
    radial-gradient(circle at 8px 20px, #4a4858 1px, transparent 1px),
    radial-gradient(circle at 24px 45px, #3c3b48 1px, transparent 1px),
    radial-gradient(circle at 17px 8px, #2c2b38 1px, transparent 1px);
  background-size: 37px 58px;
}

.drive {
  position: absolute;
  top: 0;
  right: 18px;
}

.dock {
  position: relative;
  display: flex;
  height: 51px;
  padding: 0 1px;
  border: 1px solid #454448;
  border-radius: 14px;
  background: linear-gradient(90deg, #1b1722, #15151a 50%, #17181a 92%, #4c5452);
}

.dock a {
  position: relative;
  flex: 1;
  min-width: 0;
}

.dock svg {
  width: 100%;
  height: 49px;
  overflow: visible;
}

.dock .running::after {
  content: '';
  position: absolute;
  left: 50%;
  bottom: 1px;
  width: 4px;
  height: 4px;
  margin-left: -2px;
  border-radius: 50%;
  background: #9c9ca0;
}

.dock .sep {
  width: 1px;
  margin: 6px 9px;
  background: #55555a;
}

.dock svg svg {
  width: 10px;
  height: 12px;
}

.count {
  position: absolute;
  top: 3px;
  right: 0;
  width: 15px;
  height: 15px;
  border-radius: 50%;
  background: #f0141c;
  font: 11px/15px Inter, sans-serif;
  text-align: center;
  color: #fff;
}

.cal-month {
  font: 700 7px Inter, sans-serif;
  text-anchor: middle;
  fill: #fff;
}

.cal-day {
  font: 300 21px Inter, sans-serif;
  text-anchor: middle;
  fill: #222;
}

.tv {
  font: 500 13px Inter, sans-serif;
  fill: #fff;
}

.word {
  font: 700 13px Inter, sans-serif;
  text-anchor: middle;
  fill: #fff;
}
```
